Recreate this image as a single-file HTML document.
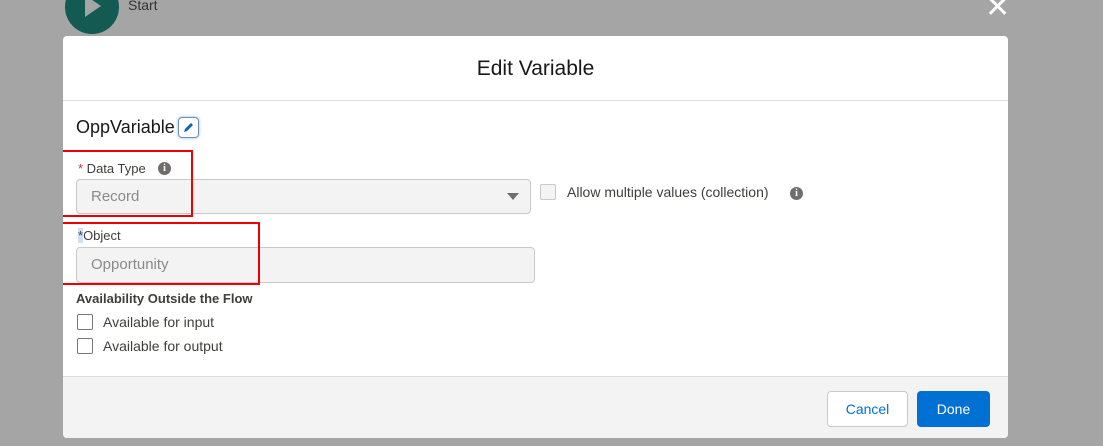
<!DOCTYPE html><html><head><style>
body{margin:0;width:1103px;height:446px;background:#a5a5a5;position:relative;overflow:hidden;font-family:"Liberation Sans",sans-serif;color:#3e3e3c}
.abs{position:absolute}
.modal{left:63px;top:36px;width:945px;height:402px;background:#fff;border-radius:4px;overflow:hidden}
.hdr{left:0;top:0;width:945px;height:64px;border-bottom:1px solid #ddd;text-align:center;line-height:66px;font-size:21px;color:#181818}
.ftr{left:0;top:340px;width:945px;height:62px;background:#f3f3f3;border-top:1px solid #ddd}
.inp{background:#f3f3f3;border:1px solid #c9c9c9;border-radius:4px;color:#8a8a8a;font-size:15px;box-sizing:border-box;padding-left:14px}
.cb{width:16px;height:16px;border:1px solid #777;border-radius:2px;background:#fff;box-sizing:border-box}
.info{width:13px;height:13px;border-radius:50%;background:#706e6b;color:#fff;font-size:10px;font-weight:bold;text-align:center;line-height:13px;font-family:"Liberation Serif",serif}
.red{border:2px solid #e00;box-sizing:border-box}
</style></head><body>
<div class="abs" style="left:65px;top:-20px;width:54px;height:54px;border-radius:50%;background:#125a52"></div>
<div class="abs" style="left:85px;top:-5px;width:0;height:0;border-left:16px solid #a5a5a5;border-top:11px solid transparent;border-bottom:11px solid transparent"></div>
<div class="abs" style="left:128px;top:-3px;font-size:14px;color:#333">Start</div>
<div class="abs" style="left:985px;top:-10px;font-size:30px;color:#fff">✕</div>
<div class="abs modal">
<div class="abs hdr">Edit Variable</div>
<div class="abs" style="left:13px;top:81px;font-size:18px;color:#181818">OppVariable</div>
<div class="abs" style="left:115px;top:81px;width:21px;height:21px;border:1px solid #6b8fb5;border-radius:4px;box-sizing:border-box;box-shadow:0 0 3px #9bc;"><svg width="19" height="19" viewBox="0 0 19 19"><path d="M5 14l1-3 6-6 2 2-6 6z" fill="#0a64b0"/></svg></div>
<div class="abs" style="left:15px;top:125px;font-size:13px"><span style="color:#c23934">*</span> Data Type</div>
<div class="abs info" style="left:95px;top:126px">i</div>
<div class="abs inp" style="left:13px;top:143px;width:455px;height:35px;line-height:33px">Record</div>
<div class="abs" style="left:444px;top:157px;border-top:7px solid #706e6b;border-left:6px solid transparent;border-right:6px solid transparent"></div>
<div class="abs cb" style="left:477px;top:148px;background:#f3f3f3;border-color:#c9c9c9"></div>
<div class="abs" style="left:504px;top:148px;font-size:14px">Allow multiple values (collection)</div>
<div class="abs info" style="left:727px;top:151px">i</div>
<div class="abs" style="left:15px;top:192px;font-size:13px"><span style="background:#cfe0f5">*</span>Object</div>
<div class="abs inp" style="left:13px;top:211px;width:459px;height:36px;line-height:34px">Opportunity</div>
<div class="abs" style="left:13px;top:255px;font-size:13px;font-weight:bold;color:#3e3e3c">Availability Outside the Flow</div>
<div class="abs cb" style="left:14px;top:278px"></div>
<div class="abs" style="left:40px;top:278px;font-size:14px">Available for input</div>
<div class="abs cb" style="left:14px;top:302px"></div>
<div class="abs" style="left:40px;top:302px;font-size:14px">Available for output</div>
<div class="abs red" style="left:-3px;top:114px;width:133px;height:67px"></div>
<div class="abs red" style="left:-3px;top:186px;width:200px;height:63px"></div>
<div class="abs ftr">
<div class="abs" style="left:764px;top:14px;width:81px;height:36px;border:1px solid #c9c9c9;border-radius:4px;background:#fff;color:#0070d2;font-size:14px;text-align:center;line-height:34px;box-sizing:border-box">Cancel</div>
<div class="abs" style="left:854px;top:14px;width:73px;height:36px;border-radius:4px;background:#0070d2;color:#fff;font-size:14px;text-align:center;line-height:36px">Done</div>
</div>
</div>
</body></html>
